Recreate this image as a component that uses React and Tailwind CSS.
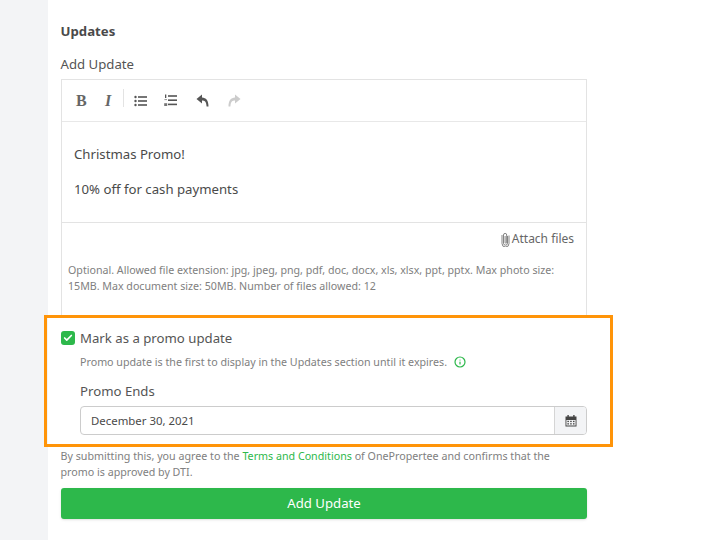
import React from "react";
import { Check, Info } from "lucide-react";

const Bullets = () => (
  <svg width="13" height="12" viewBox="0 0 13 12" className="text-[#555]" fill="currentColor">
    <circle cx="1.5" cy="2" r="1.2" />
    <circle cx="1.5" cy="6" r="1.2" />
    <circle cx="1.5" cy="10" r="1.2" />
    <rect x="4" y="1.2" width="9" height="1.6" />
    <rect x="4" y="5.2" width="9" height="1.6" />
    <rect x="4" y="9.2" width="9" height="1.6" />
  </svg>
);

const Numbers = () => (
  <svg width="13" height="13" viewBox="0 0 13 13" className="text-[#555]" fill="currentColor">
    <rect x="1" y="0.5" width="1.3" height="3.5" />
    <rect x="0.4" y="5.2" width="2.6" height="0.9" opacity="0.7" />
    <rect x="0.2" y="9.2" width="3" height="2.8" opacity="0.8" />
    <rect x="4" y="1.2" width="9" height="1.6" />
    <rect x="4" y="5.4" width="9" height="1.6" />
    <rect x="4" y="9.6" width="9" height="1.6" />
  </svg>
);

const ReplyArrow = ({ className }) => (
  <svg width="13" height="13" viewBox="0 0 13 13" className={className} fill="currentColor">
    <path d="M6 0.5 0.5 5 6 9.5V6.6c2.6 0 4.2.9 4.6 5.9h1.9C12.6 6.4 10 3.6 6 3.4z" />
  </svg>
);

const Clip = () => (
  <svg width="9" height="15" viewBox="0 0 9 15" fill="none" stroke="#777" strokeWidth="0.9" className="mr-[2px]">
    <path d="M6.5 4v7.2a2 2 0 0 1-4 0V3a1.6 1.6 0 0 1 3.2 0v7.4a.8.8 0 0 1-1.6 0V4" />
    <path d="M8 3.5v8a3.5 3.5 0 0 1-7 0V3" />
  </svg>
);

const CalendarIcon = () => (
  <svg width="12" height="12" viewBox="0 0 12 12" fill="#444">
    <rect x="2.4" y="0" width="1.4" height="2.6" />
    <rect x="8.2" y="0" width="1.4" height="2.6" />
    <path d="M0.5 1.5h11v10h-11z M1.4 5v5.6h9.2V5z" fillRule="evenodd" />
    <rect x="2.4" y="5.8" width="1.5" height="1.3" />
    <rect x="5.2" y="5.8" width="1.5" height="1.3" />
    <rect x="8" y="5.8" width="1.5" height="1.3" />
    <rect x="2.4" y="8.2" width="1.5" height="1.3" />
    <rect x="5.2" y="8.2" width="1.5" height="1.3" />
    <rect x="8" y="8.2" width="1.5" height="1.3" />
  </svg>
);

export default function App() {
  return (
    <div className="relative flex h-[540px] w-[707px] overflow-hidden bg-white font-['Noto_Sans',sans-serif] text-[#555]">
      <div className="w-12 shrink-0 bg-[#f3f4f6]" />

      <div className="w-[526px] ml-[13px] flex flex-col">
        <h2 className="-ml-[0.5px] mt-[21px] text-[13.2px] leading-5 font-bold text-[#4a4a4a]">Updates</h2>
        <label className="-ml-[0.5px] mt-[13px] text-[13.2px] leading-5">Add Update</label>

        <div className="mt-[5px] h-[237px] border border-[#e3e3e3] flex flex-col">
          <div className="h-[42px] shrink-0 border-b border-[#e8e8e8] flex items-center pl-[14px]">
            <span className="w-[11px] font-['Liberation_Serif',serif] font-bold text-[16px] leading-none text-[#666]">B</span>
            <span className="ml-[18px] w-[9px] font-['Liberation_Serif',serif] font-bold italic text-[16px] leading-none text-[#666]">I</span>
            <span className="ml-[9px] h-[18px] w-px bg-[#e3e3e3] -mt-[6px]" />
            <span className="ml-[10px] flex"><Bullets /></span>
            <span className="ml-[17px] flex"><Numbers /></span>
            <ReplyArrow className="ml-[19px] text-[#555]" />
            <ReplyArrow className="ml-[19px] text-[#ccc] -scale-x-100" />
          </div>
          <div className="h-[101px] shrink-0 border-b border-[#e3e3e3] px-3 pt-[22px] text-[13.2px] leading-5 text-[#4a4a4a]">
            <p>Christmas Promo!</p>
            <p className="mt-[15px]">10% off for cash payments</p>
          </div>
          <div className="flex justify-end items-center pr-[12px] pt-[6px] text-[12px] leading-5 text-[#666]">
            <Clip />
            Attach files
          </div>
          <p className="mt-[13px] pl-[6px] pr-3 text-[10.67px] leading-4 text-[#808080]">
            Optional. Allowed file extension: jpg, jpeg, png, pdf, doc, docx, xls, xlsx, ppt, pptx. Max photo size: 15MB. Max document size: 50MB. Number of files allowed: 12
          </p>
        </div>

        <div className="mt-[12px] flex items-center gap-[5px]">
          <span className="w-[14px] h-[14px] rounded-[3px] bg-[#2db84b] flex items-center justify-center">
            <Check size={10} strokeWidth={4} className="text-white" />
          </span>
          <span className="text-[13.2px] leading-5">Mark as a promo update</span>
        </div>

        <div className="ml-[19px] mt-[6px] flex items-center text-[10.7px] leading-4 text-[#808080]">
          Promo update is the first to display in the Updates section until it expires.
          <Info size={12} strokeWidth={2.4} className="ml-[7px] text-[#2db84b]" />
        </div>

        <label className="ml-[19px] mt-[11px] text-[13.2px] leading-5">Promo Ends</label>

        <div className="ml-[19px] mt-[5px] h-[29px] flex border border-[#ccc] rounded-[4px] overflow-hidden">
          <div className="flex-1 pl-[10px] flex items-center text-[11.4px] text-[#4a4a4a]">December 30, 2021</div>
          <div className="w-8 bg-[#f3f4f6] border-l border-[#d5d5d5] flex items-center justify-center">
            <CalendarIcon />
          </div>
        </div>

        <p className="-ml-[0.5px] mt-[13px] text-[10.7px] leading-4 text-[#808080]">
          By submitting this, you agree to the <span className="text-[#2db84b]">Terms and Conditions</span> of OnePropertee and confirms that the<br />
          promo is approved by DTI.
        </p>

        <button className="mt-[8px] h-[31px] rounded-[3px] bg-[#2db84b] text-white text-[13.2px] shadow-sm">Add Update</button>
      </div>

      <div className="absolute left-[44px] top-[315px] w-[569px] h-[132px] border-[3px] border-[#ff9408] pointer-events-none" />
    </div>
  );
}
